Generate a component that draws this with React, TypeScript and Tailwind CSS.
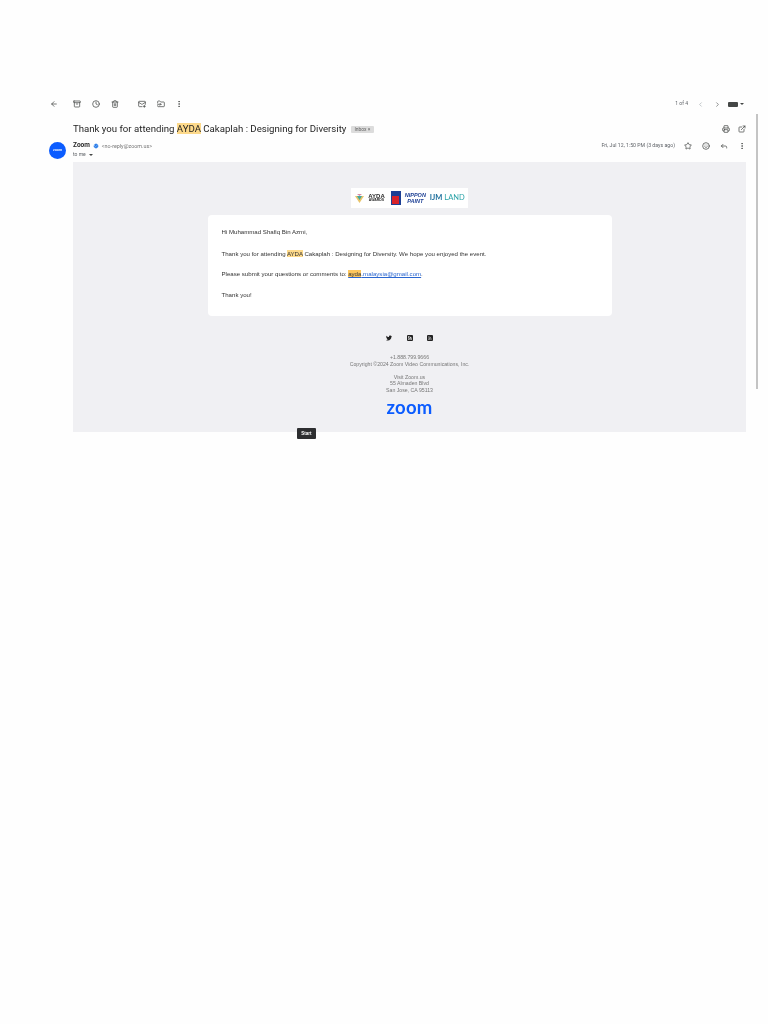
import { ArrowLeft, Archive, Clock, Trash2, MailPlus, FolderInput, MoreVertical, ChevronLeft, ChevronRight, Printer, ExternalLink, Star, Smile, Reply, BadgeCheck, Linkedin, Rss } from 'lucide-react';
import { FaTwitter } from 'react-icons/fa';

function ToolIcon({ icon: Icon }: { icon: typeof Archive }) {
  return <Icon className="w-[8px] h-[8px] text-[#444746]" strokeWidth={2.2} />;
}

export default function App() {
  return (
    <div className="relative w-full min-h-screen bg-[#fefefe] pt-[100px] font-['Liberation_Sans',sans-serif] blur-[0.3px]">
      {/* Toolbar */}
      <div className="flex items-center h-[8px] pl-[50px] pr-[24px]">
        <ToolIcon icon={ArrowLeft} />
        <div className="flex items-center gap-[11px] ml-[15px]">
          <ToolIcon icon={Archive} />
          <ToolIcon icon={Clock} />
          <ToolIcon icon={Trash2} />
        </div>
        <div className="flex items-center gap-[11px] ml-[19px]">
          <ToolIcon icon={MailPlus} />
          <ToolIcon icon={FolderInput} />
        </div>
        <div className="ml-[10px] flex">
          <ToolIcon icon={MoreVertical} />
        </div>
        <span className="ml-auto text-[5px] text-[#5f6368] font-['Roboto',sans-serif]">1 of 4</span>
        <div className="flex items-center gap-[10px] ml-[9px]">
          <ChevronLeft className="w-[7px] h-[7px] text-[#9aa0a6]" />
          <ChevronRight className="w-[7px] h-[7px] text-[#444746]" />
        </div>
        <div className="flex items-center gap-[2px] ml-[7px]">
          <div className="w-[10px] h-[5px] bg-[#444746] rounded-[1px]" />
          <div className="w-0 h-0 border-x-[2px] border-x-transparent border-t-[2px] border-t-[#444746]" />
        </div>
      </div>

      {/* Subject */}
      <div className="flex items-center mt-[15px] pl-[73px] pr-[22px] h-[12px]">
        <h1 className="text-[9.65px] text-[#1f1f1f] font-['Roboto',sans-serif] font-normal">
          Thank you for attending <span className="bg-[#fdd98a]">AYDA</span> Cakaplah : Designing for Diversity
        </h1>
        <span className="ml-[5px] bg-[#dcdcdc] rounded-[1px] px-[3px] text-[5px] leading-[7px] text-[#666] font-['Roboto',sans-serif]">Inbox ×</span>
        <div className="flex items-center gap-[8px] ml-auto">
          <ToolIcon icon={Printer} />
          <ToolIcon icon={ExternalLink} />
        </div>
      </div>

      {/* Sender */}
      <div className="flex mt-[7px] pl-[49px] pr-[22px]">
        <div className="w-[17px] h-[17px] rounded-full bg-[#0b5cff] flex items-center justify-center text-white text-[3.5px] font-bold">zoom</div>
        <div className="ml-[7px] font-['Roboto',sans-serif]">
          <div className="flex items-center h-[8px]">
            <span className="text-[6.5px] font-bold text-[#1f1f1f]">Zoom</span>
            <BadgeCheck className="w-[6px] h-[6px] ml-[3px] text-white fill-[#1a73e8]" />
            <span className="ml-[3px] text-[5.4px] text-[#777]">&lt;no-reply@zoom.us&gt;</span>
          </div>
          <div className="flex items-center gap-[2px] h-[7px] mt-[1px]">
            <span className="text-[5px] text-[#5f6368]">to me</span>
            <div className="w-0 h-0 ml-[1px] border-x-[2px] border-x-transparent border-t-[2px] border-t-[#444746]" />
          </div>
        </div>
        <div className="flex items-center h-[8px] ml-auto">
          <span className="text-[5.2px] text-[#5f6368] font-['Roboto',sans-serif]">Fri, Jul 12, 1:50 PM (3 days ago)</span>
          <div className="flex items-center gap-[10px] ml-[9px]">
            <ToolIcon icon={Star} />
            <ToolIcon icon={Smile} />
            <ToolIcon icon={Reply} />
            <ToolIcon icon={MoreVertical} />
          </div>
        </div>
      </div>

      {/* Email body */}
      <div className="ml-[73px] mr-[22px] mt-[3px] h-[270px] bg-[#f0f0f3] pt-[26px] flex flex-col items-center">
        <div className="w-[117px] h-[20px] bg-white flex items-center justify-center gap-[3px]">
          <svg width="11" height="11" viewBox="0 0 11 11">
            <path d="M1 3h9L5.5 10z" fill="#e9c46a" />
            <path d="M3 3h5L5.5 7z" fill="#3fa7a0" />
            <path d="M3 1h5l-2.5 2z" fill="#d98aa0" />
          </svg>
          <div className="flex flex-col items-center leading-none text-[#2a2a2a] font-bold mr-[3px]">
            <span className="text-[6px]">AYDA</span>
            <span className="text-[3.5px]">AWARDS</span>
          </div>
          <div className="w-[10px] h-[14px] bg-[#1c3f94] flex items-end justify-center pb-[1px]">
            <div className="w-[7px] h-[8px] bg-[#d8232a]" />
          </div>
          <div className="flex flex-col items-center leading-[6px] text-[#1c3f94] font-bold italic text-[5.5px] ml-[1px]">
            <span>NIPPON</span>
            <span>PAINT</span>
          </div>
          <div className="text-[7.5px] ml-[1px] font-['Lato',sans-serif] whitespace-nowrap">
            <span className="text-[#1c6e9c] font-bold">IJM</span> <span className="text-[#2aa3a8]">LAND</span>
          </div>
        </div>

        <div className="w-[404px] h-[101px] mt-[7px] bg-white rounded-[4px] px-[14px] pt-[13px] text-[6.1px] leading-[8px] text-[#333]">
          <p>Hi Muhammad Shafiq Bin Azmi,</p>
          <p className="mt-[14px]">
            Thank you for attending <span className="bg-[#fdd98a]">AYDA</span> Cakaplah : Designing for Diversity. We hope you enjoyed the event.
          </p>
          <p className="mt-[12px]">
            Please submit your questions or comments to:{' '}
            <span className="text-[#2a66d0] underline">
              <span className="bg-[#fdc75e] text-[#333]">ayda</span>.malaysia@gmail.com
            </span>
            .
          </p>
          <p className="mt-[13px]">Thank you!</p>
        </div>

        <div className="flex items-center gap-[14.5px] mt-[19px] text-[#222]">
          <FaTwitter className="w-[6px] h-[6px]" />
          <div className="w-[6px] h-[6px] bg-[#222] rounded-[1px] flex items-center justify-center">
            <Linkedin className="w-[4px] h-[4px] text-white" strokeWidth={3} />
          </div>
          <div className="w-[6px] h-[6px] bg-[#222] rounded-[1px] flex items-center justify-center">
            <Rss className="w-[4px] h-[4px] text-white" strokeWidth={3} />
          </div>
        </div>

        <div className="mt-[13px] text-center text-[5.2px] leading-[6.5px] text-[#777]">
          <p>+1.888.799.9666</p>
          <p>Copyright ©2024 Zoom Video Communications, Inc.</p>
          <p className="mt-[6.5px]">Visit Zoom.us</p>
          <p>55 Almaden Blvd</p>
          <p>San Jose, CA 95113</p>
        </div>

        <div className="mt-[4px] text-[18.5px] leading-[20px] font-bold text-[#0b5cff] font-['Lato',sans-serif] tracking-[0.2px]">zoom</div>
      </div>

      {/* Tooltip */}
      <div className="absolute left-[297px] top-[428px] w-[19px] h-[11px] rounded-[1px] bg-[#2d2e30] text-white text-[4.5px] font-bold flex items-center justify-center pt-[2px]">Start</div>

      {/* Scrollbar */}
      <div className="absolute left-[756px] top-[114px] w-[2px] h-[275px] bg-[#c4c4c4]" />
    </div>
  );
}
